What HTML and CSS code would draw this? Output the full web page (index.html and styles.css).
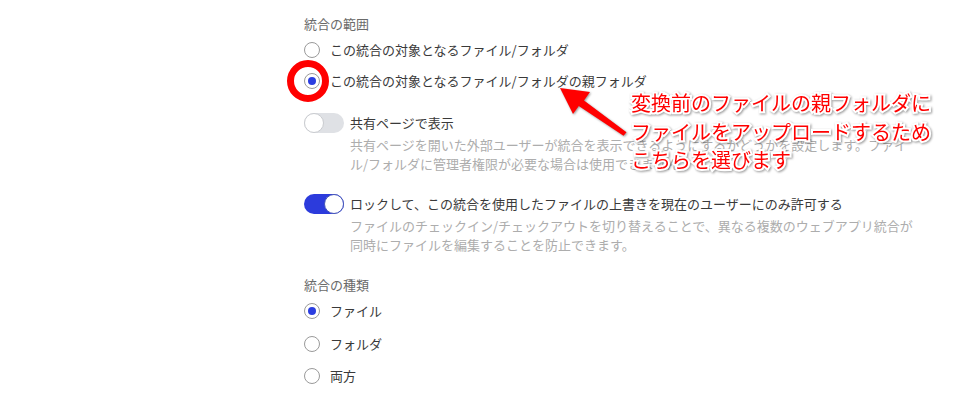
FILE: index.html
```html
<!DOCTYPE html>
<html lang="ja">
<head>
<meta charset="utf-8">
<title>統合の設定</title>
<link rel="stylesheet" href="styles.css">
</head>
<body>
<main class="panel">
  <div class="group-label">統合の範囲</div>
  <div class="radio-row"><span class="radio"></span><span class="radio-text">この統合の対象となるファイル/フォルダ</span></div>
  <div class="radio-row"><span class="radio checked"></span><span class="radio-text">この統合の対象となるファイル/フォルダの親フォルダ</span></div>

  <div class="toggle-block first">
    <div class="toggle-row"><span class="toggle"><span class="knob"></span></span><span class="toggle-label">共有ページで表示</span></div>
    <p class="desc">共有ページを開いた外部ユーザーが統合を表示できるようにするかどうかを設定します。ファイル/フォルダに管理者権限が必要な場合は使用できません。</p>
  </div>

  <div class="toggle-block">
    <div class="toggle-row"><span class="toggle on"><span class="knob"></span></span><span class="toggle-label">ロックして、この統合を使用したファイルの上書きを現在のユーザーにのみ許可する</span></div>
    <p class="desc">ファイルのチェックイン/チェックアウトを切り替えることで、異なる複数のウェブアプリ統合が同時にファイルを編集することを防止できます。</p>
  </div>

  <div class="group-label second">統合の種類</div>
  <div class="radio-row tall"><span class="radio checked"></span><span class="radio-text">ファイル</span></div>
  <div class="radio-row tall"><span class="radio"></span><span class="radio-text">フォルダ</span></div>
  <div class="radio-row tall"><span class="radio"></span><span class="radio-text">両方</span></div>
</main>

<div class="ring"></div>
<svg class="arrow" width="967" height="406" viewBox="0 0 967 406">
  <polygon points="560,88 590,92 584,100.6 626.5,132.2 623.5,135.8 578.8,106 573,114" fill="#ff0000"/>
</svg>
<div class="note">変換前のファイルの親フォルダに<br>ファイルをアップロードするため<br>こちらを選びます</div>
</body>
</html>
```

FILE: styles.css
```css
html, body {
  margin: 0;
  padding: 0;
  background: #ffffff;
}
body {
  width: 967px;
  height: 406px;
  overflow: hidden;
  position: relative;
  font-family: "Noto Sans CJK JP", "Noto Sans", sans-serif;
  font-size: 13px;
  color: #3a3a3a;
}
.panel {
  padding: 14px 0 0 304px;
}
.group-label {
  line-height: 20px;
  height: 20px;
  color: #6a6a6a;
}
.group-label.second {
  margin-top: 21px;
}
.radio-row {
  display: flex;
  align-items: center;
  height: 31px;
}
.radio-row.tall {
  height: 32.5px;
}
.radio {
  width: 16px;
  height: 16px;
  box-sizing: border-box;
  border: 1px solid #9a9a9a;
  border-radius: 50%;
  background: #ffffff;
  display: flex;
  align-items: center;
  justify-content: center;
  margin-right: 10px;
  flex: none;
}
.radio.checked::after {
  content: "";
  width: 8px;
  height: 8px;
  border-radius: 50%;
  background: #2b3ee0;
}
.radio-text {
  line-height: 20px;
}
.toggle-block {
  margin-top: 21px;
}
.toggle-block.first {
  margin-top: 17px;
}
.toggle-row {
  display: flex;
  align-items: center;
  height: 20px;
}
.toggle {
  width: 40px;
  height: 20px;
  border-radius: 10px;
  background: #dfe1e5;
  display: flex;
  justify-content: flex-start;
  margin-right: 6px;
  flex: none;
}
.toggle .knob {
  width: 20px;
  height: 20px;
  box-sizing: border-box;
  border-radius: 50%;
  background: #ffffff;
  border: 1px solid #c9cbcf;
}
.toggle.on {
  background: #2c3bdc;
  justify-content: flex-end;
}
.toggle.on .knob {
  border-color: #4656b8;
}
.toggle-label {
  line-height: 20px;
}
.desc {
  margin: 2px 0 0 46px;
  width: 566px;
  line-height: 19px;
  color: #adadad;
}
.ring {
  position: absolute;
  left: 287px;
  top: 60px;
  width: 42px;
  height: 42px;
  box-sizing: border-box;
  border: 7px solid #ff0000;
  border-radius: 50%;
}
.arrow {
  position: absolute;
  left: 0;
  top: 0;
  pointer-events: none;
  filter: drop-shadow(1px 1.5px 1px rgba(0, 0, 0, 0.4));
}
.note {
  position: absolute;
  left: 631px;
  top: 89px;
  font-size: 20px;
  line-height: 28.5px;
  font-weight: 400;
  color: #ff0000;
  white-space: nowrap;
  -webkit-text-stroke: 4px #ffffff;
  paint-order: stroke fill;
  filter: drop-shadow(1px 1.5px 1px rgba(0, 0, 0, 0.4));
}
```
